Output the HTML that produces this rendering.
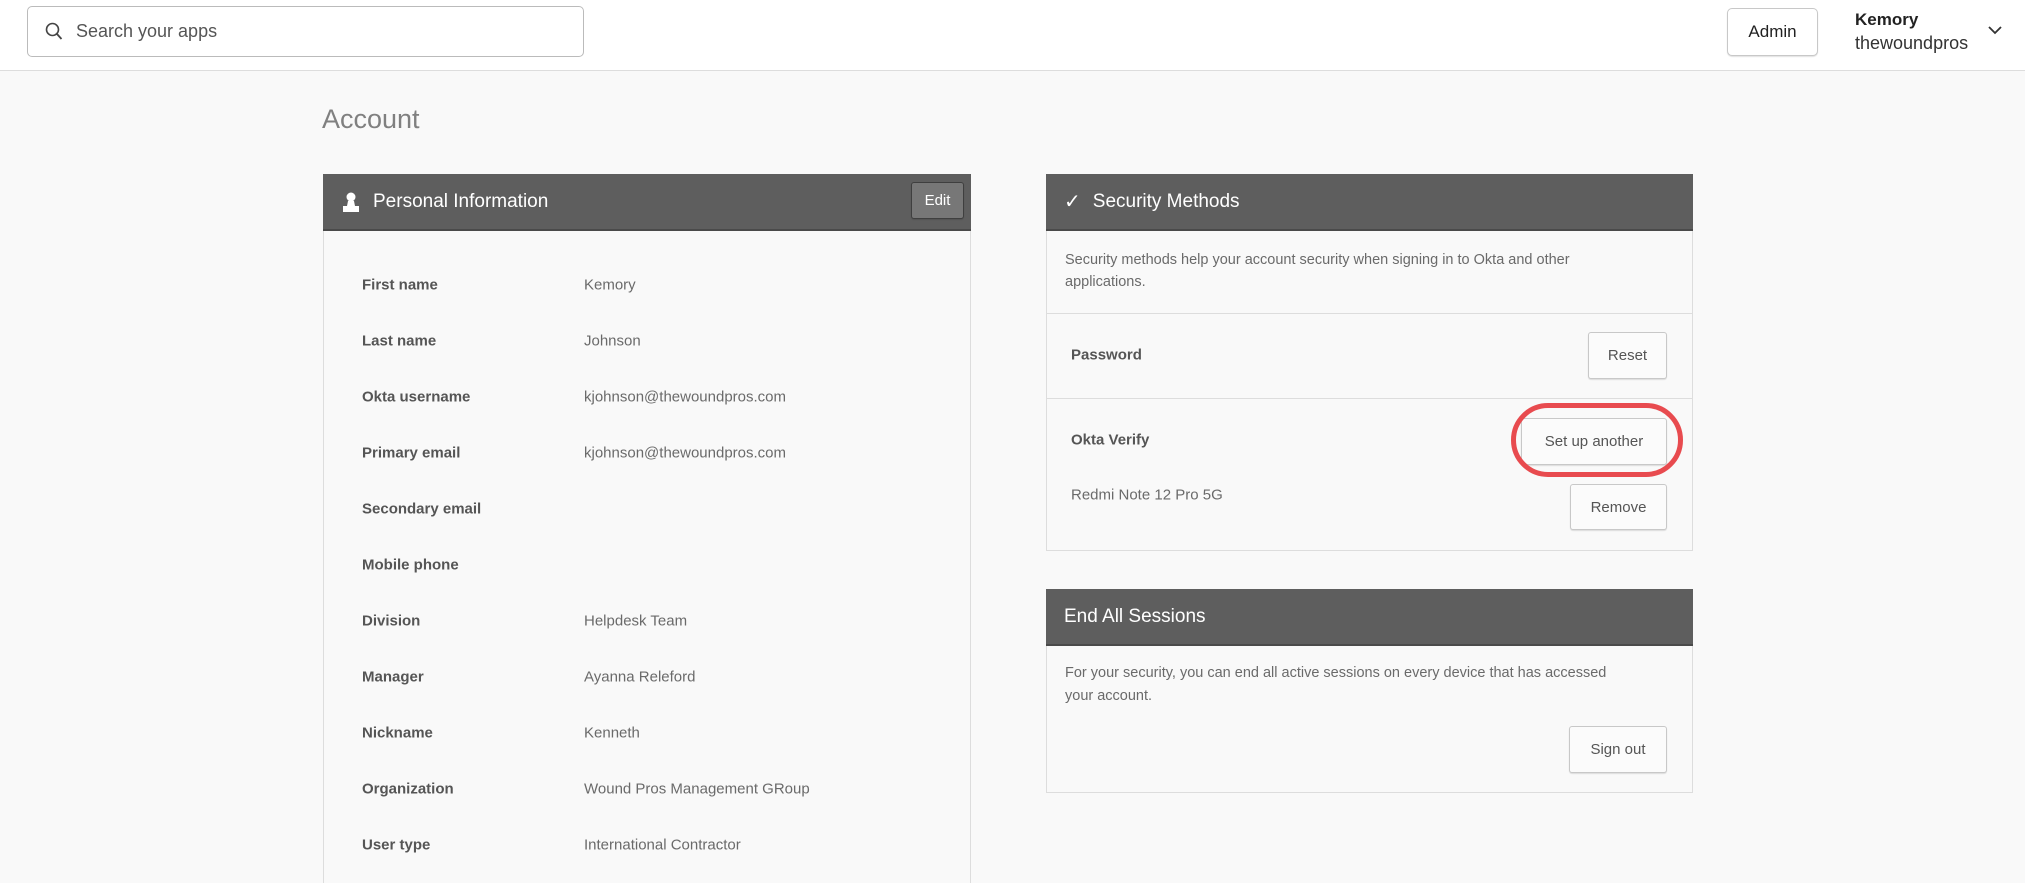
<!DOCTYPE html>
<html><head><meta charset="utf-8"><style>
*{box-sizing:border-box;margin:0;padding:0}
html{width:2025px;height:883px;overflow:hidden}
body{width:2025px;height:883px;overflow:hidden;background:#f9f9f9;font-family:"Liberation Sans",sans-serif;color:#5e5e5e;position:relative}
.abs{position:absolute}
.hdr{left:0;top:0;width:2025px;height:71px;background:#fff;border-bottom:1px solid #ddd}
.search{left:27px;top:6px;width:557px;height:51px;border:1px solid #bbb;border-radius:5px;background:#fff}
.btn{position:absolute;background:#fbfbfb;border:1px solid #c8c8c8;border-radius:3px;box-shadow:0 1px 1px rgba(0,0,0,.12);font-size:15px;color:#555;display:flex;align-items:center;justify-content:center}
.panel{position:absolute;background:#f9f9f9;border:1px solid #ddd}
.ph{position:absolute;left:-1px;right:-1px;top:-1px;height:57px;background:#5e5e5e;border-bottom:2px solid #4a4a4a;color:#fff;font-size:19px;display:flex;align-items:center}
.lbl{position:absolute;left:362px;font-size:15px;color:#555;font-weight:bold;transform:translateY(-50%)}
.val{position:absolute;left:584px;font-size:15px;color:#6a6a6a;transform:translateY(-50%)}
.t{position:absolute;font-size:15px;transform:translateY(-50%)}
</style></head><body>
<div class="abs hdr"></div>
<div class="abs search">
<svg class="abs" style="left:17px;top:15px" width="18" height="20" viewBox="0 0 18 20"><circle cx="7.5" cy="7.5" r="6" fill="none" stroke="#444" stroke-width="1.6"/><path d="M12 12l4.5 5" stroke="#444" stroke-width="1.8"/></svg>
<div class="abs" style="left:48px;top:14px;font-size:18px;color:#555">Search your apps</div>
</div>
<div class="btn" style="left:1727px;top:8px;width:91px;height:48px;border-radius:5px;background:#fff;font-size:17px;color:#222">Admin</div>
<div class="abs" style="left:1855px;top:10px;font-size:17px;font-weight:bold;color:#222">Kemory</div>
<div class="abs" style="left:1855px;top:33px;font-size:18px;color:#333">thewoundpros</div>
<svg class="abs" style="left:1988px;top:26px" width="14" height="9" viewBox="0 0 14 9"><path d="M1 1l6 6 6-6" fill="none" stroke="#333" stroke-width="1.8"/></svg>

<div class="abs" style="left:322px;top:104px;font-size:27px;color:#808080">Account</div>

<div class="panel" style="left:323px;top:174px;width:648px;height:709px;border-bottom:none">
<div class="ph"><svg style="margin-left:19px" width="18" height="20" viewBox="0 0 18 20"><circle cx="9" cy="5" r="4.5" fill="#fff"/><path d="M6 9h6l1 5h4v6H1v-6h4z" fill="#fff"/></svg><span style="margin-left:13px">Personal Information</span></div>
<div class="btn" style="left:587px;top:7px;width:53px;height:37px;background:#777;border-color:#3f3f3f;color:#fff;font-size:15px">Edit</div>
</div>
<div class="lbl" style="top:285px">First name</div><div class="val" style="top:285px">Kemory</div>
<div class="lbl" style="top:341px">Last name</div><div class="val" style="top:341px">Johnson</div>
<div class="lbl" style="top:397px">Okta username</div><div class="val" style="top:397px">kjohnson@thewoundpros.com</div>
<div class="lbl" style="top:453px">Primary email</div><div class="val" style="top:453px">kjohnson@thewoundpros.com</div>
<div class="lbl" style="top:509px">Secondary email</div>
<div class="lbl" style="top:565px">Mobile phone</div>
<div class="lbl" style="top:621px">Division</div><div class="val" style="top:621px">Helpdesk Team</div>
<div class="lbl" style="top:677px">Manager</div><div class="val" style="top:677px">Ayanna Releford</div>
<div class="lbl" style="top:733px">Nickname</div><div class="val" style="top:733px">Kenneth</div>
<div class="lbl" style="top:789px">Organization</div><div class="val" style="top:789px">Wound Pros Management GRoup</div>
<div class="lbl" style="top:845px">User type</div><div class="val" style="top:845px">International Contractor</div>

<div class="panel" style="left:1046px;top:174px;width:647px;height:377px">
<div class="ph"><span style="margin-left:18px;font-size:20px">✓</span><span style="margin-left:12px">Security Methods</span></div>
<div class="abs" style="left:-1px;right:-1px;top:138px;border-top:1px solid #ddd"></div>
<div class="abs" style="left:-1px;right:-1px;top:223px;border-top:1px solid #ddd"></div>
</div>
<div class="t" style="left:1065px;top:260px;font-size:14.5px;color:#6a6a6a">Security methods help your account security when signing in to Okta and other</div>
<div class="t" style="left:1065px;top:282px;font-size:14.5px;color:#6a6a6a">applications.</div>
<div class="t" style="left:1071px;top:355px;font-weight:bold;color:#555">Password</div>
<div class="btn" style="left:1588px;top:332px;width:79px;height:47px">Reset</div>
<div class="t" style="left:1071px;top:440px;font-weight:bold;color:#555">Okta Verify</div>
<div class="btn" style="left:1521px;top:418px;width:146px;height:47px">Set up another</div>
<div class="abs" style="left:1511px;top:403px;width:172px;height:74px;border:5px solid #e84b4f;border-radius:37px"></div>
<div class="t" style="left:1071px;top:495px;color:#6a6a6a">Redmi Note 12 Pro 5G</div>
<div class="btn" style="left:1570px;top:484px;width:97px;height:46px">Remove</div>

<div class="panel" style="left:1046px;top:589px;width:647px;height:204px">
<div class="ph"><span style="margin-left:18px">End All Sessions</span></div>
</div>
<div class="t" style="left:1065px;top:673px;font-size:14.5px;color:#6a6a6a">For your security, you can end all active sessions on every device that has accessed</div>
<div class="t" style="left:1065px;top:696px;font-size:14.5px;color:#6a6a6a">your account.</div>
<div class="btn" style="left:1569px;top:726px;width:98px;height:47px">Sign out</div>
</body></html>
